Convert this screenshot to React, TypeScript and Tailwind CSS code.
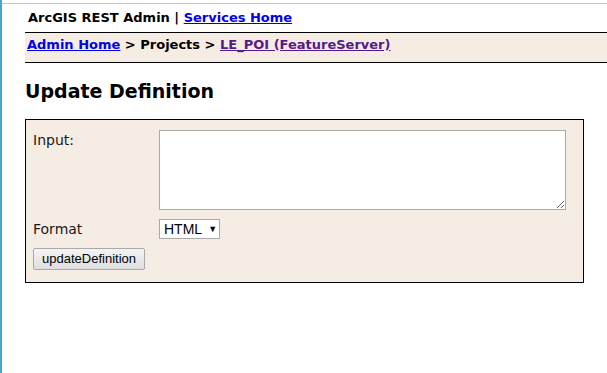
export default function App() {
  return (
    <div className="flex min-h-[373px] bg-white font-['DejaVu_Sans',Verdana,sans-serif] text-black">
      <div className="w-[2px] shrink-0 bg-[#4ca2c9]" />
      <div className="flex-1 pt-[3px]">
        <div className="border-t border-[#c8c8c8] pt-[6px]">
          <div className="pl-[25px] text-[13px] font-bold leading-[16px]">
            <span className="pl-[1px]">ArcGIS REST Admin | </span>
            <a href="#" className="text-[#0000ee] underline">Services Home</a>
          </div>

          <div className="ml-[23px] mt-[6px] h-[31px] border-y border-black bg-[#f5ede4] pl-[2px] pt-[4px] text-[13px] font-bold leading-[16px]">
            <a href="#" className="text-[#0000ee] underline">Admin Home</a>
            <span> &gt; Projects &gt; </span>
            <a href="#" className="text-[#551a8b] underline">LE_POI (FeatureServer)</a>
          </div>

          <h2 className="ml-[23px] mt-[16px] text-[19px] font-bold leading-[24px]">Update Definition</h2>

          <div className="ml-[23px] mt-[16px] w-[559px] border border-black bg-[#f5ede4] px-[7px] pb-[12px] pt-[10px] text-[14px] leading-[17px]">
            <div className="flex">
              <div className="w-[126px] pt-[2px] text-[#1a1a1a]">Input:</div>
              <textarea className="h-[80px] w-[407px] border border-[#a9a9a9] bg-white outline-none" />
            </div>
            <div className="mt-[9px] flex items-center">
              <div className="w-[126px] text-[#1a1a1a]">Format</div>
              <div className="flex h-[20px] w-[61px] items-center border border-[#a9a9a9] bg-white pl-[4px] text-[14px] font-['Liberation_Sans',Arial,sans-serif]">
                <span>HTML</span>
                <span className="ml-[6px] text-[9px]">▼</span>
              </div>
            </div>
            <button className="mt-[9px] h-[22px] w-[112px] rounded-[2px] border border-[#a9a9a9] bg-gradient-to-b from-[#f4f4f4] to-[#dedede] text-[13px] leading-[18px] font-['Liberation_Sans',Arial,sans-serif]">
              updateDefinition
            </button>
          </div>
        </div>
      </div>
    </div>
  );
}
